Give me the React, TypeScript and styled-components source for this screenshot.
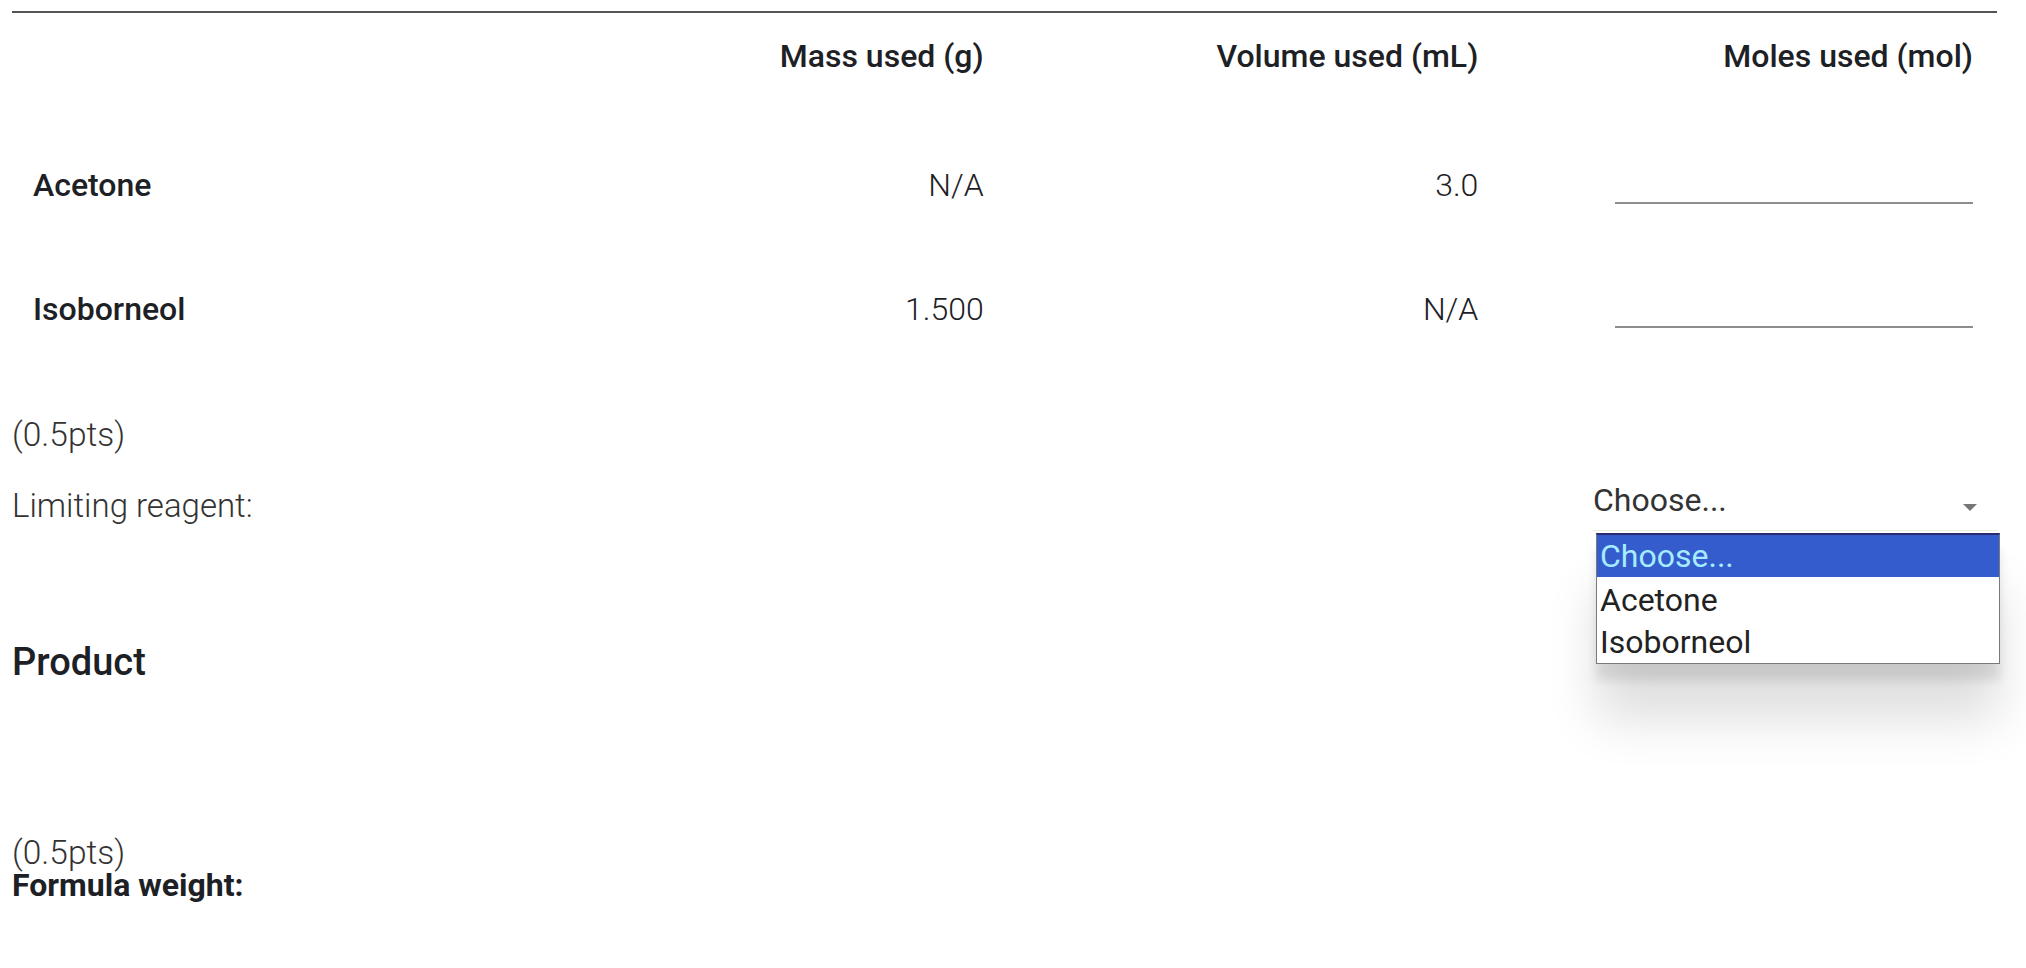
import React from "react";
import styled, { createGlobalStyle } from "styled-components";

interface IReagent {
    name: string,
    mass: string,
    volume: string
}

const reagents: IReagent[] = [
    { name: "Acetone", mass: "N/A", volume: "3.0" },
    { name: "Isoborneol", mass: "1.500", volume: "N/A" }
];

const options: string[] = ["Choose...", "Acetone", "Isoborneol"];

export default function App() {
    return (
        <>
            <GlobalStyle />
            <Page>
                <Table>
                    <HeaderRow>
                        <HeadCell />
                        <HeadCell>Mass used (g)</HeadCell>
                        <HeadCell>Volume used (mL)</HeadCell>
                        <HeadCell>Moles used (mol)</HeadCell>
                    </HeaderRow>
                    {reagents.map((r: IReagent) => (
                        <BodyRow key={r.name}>
                            <NameCell>{r.name}</NameCell>
                            <ValueCell>{r.mass}</ValueCell>
                            <ValueCell>{r.volume}</ValueCell>
                            <ValueCell>
                                <MolesInput type="text" />
                            </ValueCell>
                        </BodyRow>
                    ))}
                </Table>

                <Question>
                    <Points>(0.5pts)</Points>
                    <AnswerRow>
                        <Label>Limiting reagent:</Label>
                        <SelectWrap>
                            <SelectText>Choose...</SelectText>
                            <Caret />
                            <Popup>
                                {options.map((opt: string, i: number) => (
                                    <Option key={opt} selected={i === 0}>{opt}</Option>
                                ))}
                            </Popup>
                        </SelectWrap>
                    </AnswerRow>
                </Question>

                <Heading>Product</Heading>

                <Question2>
                    <Points>(0.5pts)</Points>
                    <BoldLabel>Formula weight:</BoldLabel>
                </Question2>
            </Page>
        </>
    );
}

const GlobalStyle = createGlobalStyle`
    html, body {
        margin: 0;
        padding: 0;
        background: #ffffff;
        font-family: Roboto, "Liberation Sans", sans-serif;
        color: #1d2125;
    }
`

const Page = styled.div`
    width: 2026px;
    height: 968px;
    box-sizing: border-box;
    padding: 11px 29px 0 12px;
    overflow: hidden;
`

const Table = styled.div`
    border-top: 2px solid #555;
`

const HeaderRow = styled.div`
    display: grid;
    grid-template-columns: 501px repeat(3, 1fr);
    height: 110px;
    padding-top: 19px;
    box-sizing: border-box;
`

const HeadCell = styled.div`
    font-size: 32px;
    line-height: 48px;
    font-weight: 500;
    text-align: right;
    padding-right: 24px;
    color: #1d2125;
`

const BodyRow = styled.div`
    display: grid;
    grid-template-columns: 501px repeat(3, 1fr);
    height: 124px;
    align-items: center;
`

const NameCell = styled.div`
    font-size: 32px;
    line-height: 48px;
    font-weight: 500;
    padding-left: 21px;
`

const ValueCell = styled.div`
    font-size: 32px;
    line-height: 48px;
    font-weight: 300;
    text-align: right;
    padding-right: 24px;
    display: flex;
    justify-content: flex-end;
    align-items: center;
`

const MolesInput = styled.input`
    width: 358px;
    height: 37px;
    box-sizing: border-box;
    border: none;
    border-bottom: 2px solid #8d8d8d;
    outline: none;
    background: transparent;
    font-family: inherit;
    font-size: 32px;
    padding: 0;
`

const Question = styled.div`
    margin-top: 47px;
`

const Question2 = styled.div`
    margin-top: 151px;
`

const Points = styled.div`
    font-size: 33.5px;
    line-height: 33px;
    font-weight: 300;
    color: #333;
`

const AnswerRow = styled.div`
    margin-top: 31px;
    height: 48px;
    display: flex;
    justify-content: space-between;
    align-items: flex-start;
`

const Label = styled.div`
    font-size: 33px;
    line-height: 48px;
    font-weight: 300;
    color: #333;
`

const SelectWrap = styled.div`
    position: relative;
    width: 404px;
    height: 48px;
    border-bottom: 1px solid #eeeedd;
`

const SelectText = styled.div`
    font-size: 32px;
    line-height: 48px;
    font-weight: 400;
    color: #333;
    margin-top: -6px;
`

const Caret = styled.div`
    position: absolute;
    right: 20px;
    top: 22px;
    width: 0;
    height: 0;
    border-left: 7px solid transparent;
    border-right: 7px solid transparent;
    border-top: 7px solid #777;
`

const Popup = styled.div`
    position: absolute;
    left: 3px;
    top: 51px;
    width: 404px;
    box-sizing: border-box;
    background: #ffffff;
    border: 1px solid #7a7a7a;
    border-top: 2px solid #2f2a70;
    box-shadow: 0 16px 10px rgba(0, 0, 0, 0.1), 0 56px 50px rgba(0, 0, 0, 0.13);
    z-index: 10;
`

const Option = styled.div<{ selected: boolean }>`
    height: 42px;
    line-height: 42px;
    padding-left: 3px;
    font-size: 32px;
    font-weight: 400;
    font-family: Roboto, "Liberation Sans", sans-serif;
    color: ${p => p.selected ? "#a6ecff" : "#222"};
    background: ${p => p.selected ? "#355ccc" : "#ffffff"};
    margin-bottom: ${p => p.selected ? "2px" : "0"};
`

const Heading = styled.div`
    margin-top: 110px;
    font-size: 38px;
    line-height: 45px;
    font-weight: 500;
    color: #1d2125;
`

const BoldLabel = styled.div`
    font-size: 32px;
    line-height: 33px;
    font-weight: 700;
    color: #1d2125;
`
